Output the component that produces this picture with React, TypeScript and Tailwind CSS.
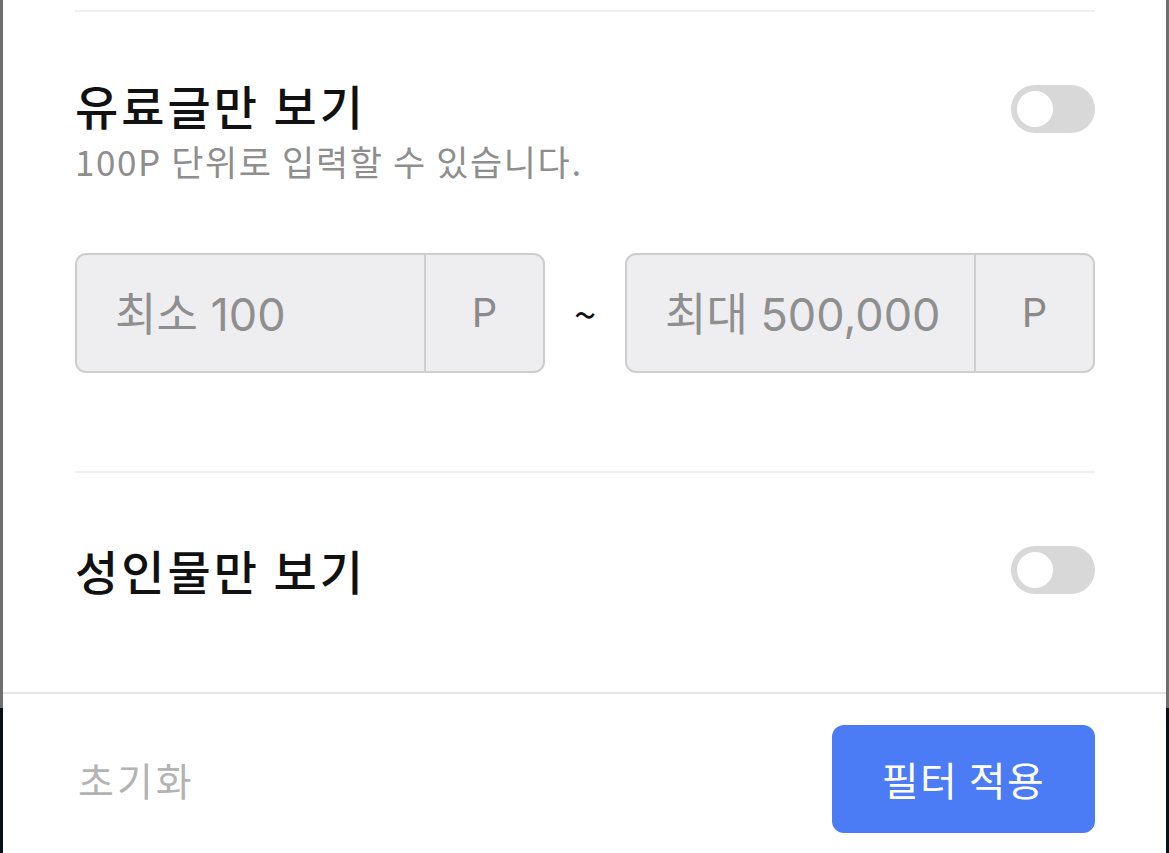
import { useState } from 'react'

function Toggle({ on, onChange }: { on: boolean; onChange: () => void }) {
  return (
    <button
      onClick={onChange}
      className={`flex h-[48px] w-[84px] shrink-0 items-center rounded-full px-[6px] ${
        on ? 'justify-end bg-[#4b7bf5]' : 'justify-start bg-[#d8d8d8]'
      }`}
    >
      <span className="block h-[36px] w-[36px] rounded-full bg-white" />
    </button>
  )
}

function PointInput({ placeholder }: { placeholder: string }) {
  return (
    <div
      className="flex h-[120px] w-[470px] overflow-hidden rounded-[11px] border-2 border-[#cecece] bg-[#eeeef0]"
      style={{ fontFamily: 'Inter, "Noto Sans CJK KR", sans-serif' }}
    >
      <input
        placeholder={placeholder}
        className="min-w-0 flex-1 bg-transparent pl-[38px] pt-[4px] text-[45px] text-[#222] outline-none placeholder:text-[#8f8f8f]"
      />
      <div className="flex w-[119px] items-center justify-center border-l-2 border-[#cecece] text-[40px] text-[#8a8a8a]">
        P
      </div>
    </div>
  )
}

function App() {
  const [paidOnly, setPaidOnly] = useState(false)
  const [adultOnly, setAdultOnly] = useState(false)

  return (
    <div
      className="flex h-[853px] w-[1169px] overflow-hidden bg-white"
      style={{ fontFamily: '"Noto Sans CJK KR", "Noto Sans", sans-serif' }}
    >
      <div className="flex w-[3px] flex-col">
        <div className="h-[708px] bg-[#6e6e6e]" />
        <div className="flex-1 bg-[#0a0f14]" />
      </div>

      <div className="flex flex-1 flex-col">
        <div className="pl-[72px] pr-[71px] pt-[10px]">
          <div className="h-[2px] bg-[#efefef]" />

          <div className="mt-[64px] flex items-start justify-between">
            <div>
              <h2 className="text-[47px] font-medium leading-[57px] tracking-[3px] text-[#111]">
                유료글만 보기
              </h2>
              <p className="mt-[6px] text-[35px] leading-[44px] tracking-[1.6px] text-[#8e8e8e]">
                100P 단위로 입력할 수 있습니다.
              </p>
            </div>
            <div className="mt-[9px]">
              <Toggle on={paidOnly} onChange={() => setPaidOnly(!paidOnly)} />
            </div>
          </div>

          <div className="mt-[70px] flex items-center justify-between">
            <PointInput placeholder="최소 100" />
            <span className="text-[40px] text-[#111]">~</span>
            <PointInput placeholder="최대 500,000" />
          </div>

          <div className="mt-[98px] h-[2px] bg-[#efefef]" />

          <div className="mt-[68px] flex items-center justify-between">
            <h2 className="text-[47px] font-medium leading-[57px] tracking-[3px] text-[#111]">
              성인물만 보기
            </h2>
            <Toggle on={adultOnly} onChange={() => setAdultOnly(!adultOnly)} />
          </div>
        </div>

        <div className="mt-[94px] h-[2px] bg-[#e4e4e4]" />

        <div className="flex items-center justify-between pl-[75px] pr-[71px] pt-[31px]">
          <button className="text-[39px] tracking-[3px] text-[#b3b3b3]">초기화</button>
          <button className="h-[108px] w-[263px] rounded-[12px] bg-[#4b7bf5] text-[40px] tracking-[1.5px] text-white">
            필터 적용
          </button>
        </div>
      </div>

      <div className="flex w-[3px] flex-col">
        <div className="h-[708px] bg-[#6e6e6e]" />
        <div className="flex-1 bg-[#0a0f14]" />
      </div>
    </div>
  )
}

export default App
